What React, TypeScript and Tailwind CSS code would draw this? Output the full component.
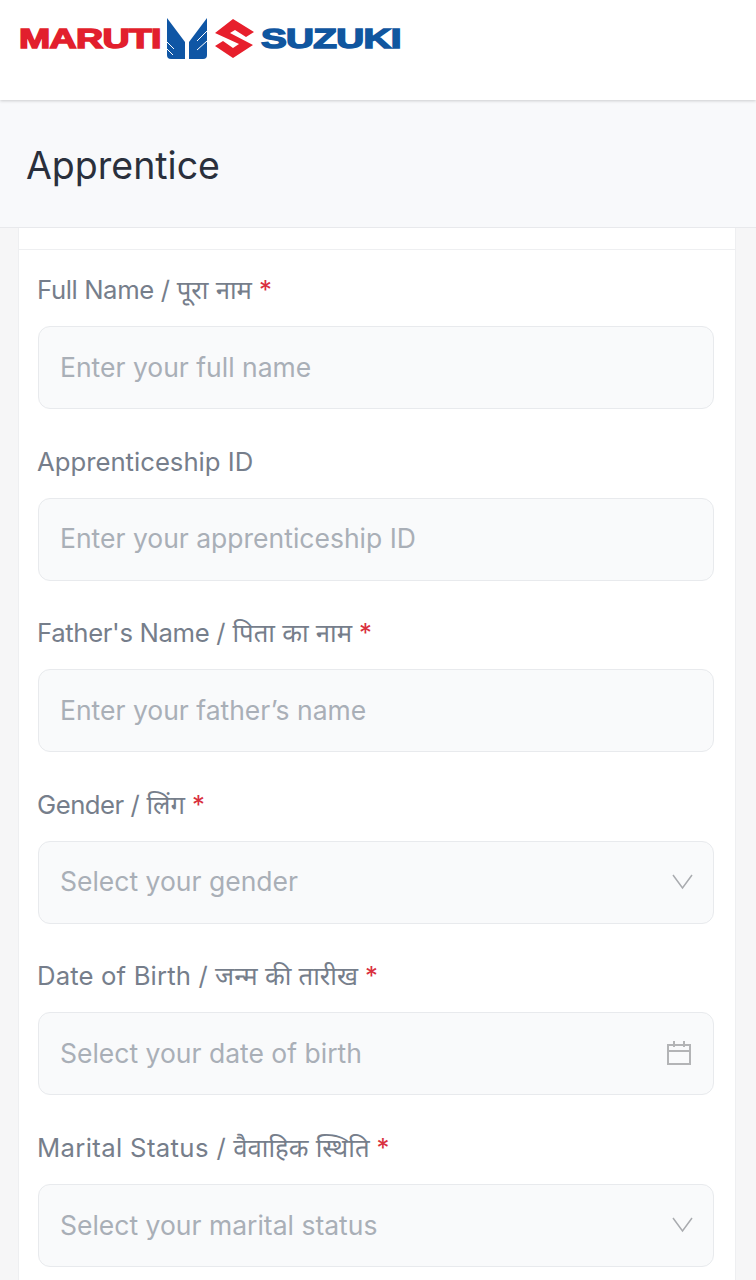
const fields = [
    { latin: 'Full Name /', hindi: 'पूरा नाम', required: true, tracking: 'tracking-[-0.4px]', placeholder: 'Enter your full name' },
    { latin: 'Apprenticeship ID', hindi: '', required: false, tracking: '', placeholder: 'Enter your apprenticeship ID' },
    { latin: "Father's Name /", hindi: 'पिता का नाम', required: true, tracking: 'tracking-[-0.35px]', placeholder: 'Enter your father’s name' },
    { latin: 'Gender /', hindi: 'लिंग', required: true, tracking: 'tracking-[-0.5px]', placeholder: 'Select your gender', icon: 'chevron' },
    { latin: 'Date of Birth /', hindi: 'जन्म की तारीख', required: true, tracking: 'tracking-[0.15px]', placeholder: 'Select your date of birth', icon: 'calendar' },
    { latin: 'Marital Status /', hindi: 'वैवाहिक स्थिति', required: true, tracking: 'tracking-[0.35px]', placeholder: 'Select your marital status', icon: 'chevron' },
];

function Logo() {
    return (
        <div className="flex items-center font-['Liberation_Sans',sans-serif] font-bold leading-none">
            <span className="w-[141px] text-[28px] tracking-[-0.5px] text-[#e21f2d] [-webkit-text-stroke:1.5px_#e21f2d] origin-left scale-x-[1.34]">
                MARUTI
            </span>
            <svg width="42" height="41" viewBox="0 0 42 41" className="ml-[6px]">
                <path d="M1 0 L19 24 V41 H5 Q1 41 1 37 Z" fill="#0f56a5" />
                <path d="M41 0 L23 24 V41 H37 Q41 41 41 37 Z" fill="#0f56a5" />
                <path d="M1 24 L8 31 M1 31 L7 37" stroke="#fff" strokeWidth="1" />
                <path d="M41 13 L31 23 M41 23 L31 32" stroke="#fff" strokeWidth="1" />
            </svg>
            <svg width="40" height="40" viewBox="0 0 40 40" className="ml-[7px]">
                <path d="M18 0 L39 13 L31 18 L20 11 L15 14 L38 26 L18 39 L0 27 L8 22 L18 29 L24 25 L0 14 Z" fill="#e71f2c" />
            </svg>
            <span className="ml-[6px] text-[28px] tracking-[-0.5px] text-[#10569f] [-webkit-text-stroke:1.5px_#10569f] origin-left scale-x-[1.38]">
                SUZUKI
            </span>
        </div>
    );
}

function ChevronIcon() {
    return (
        <svg width="21" height="16" viewBox="0 0 21 16" fill="none" stroke="#a9abaf" strokeWidth="1.5">
            <path d="M1 1 L10.5 14 L20 1" />
        </svg>
    );
}

function CalendarIcon() {
    return (
        <svg width="26" height="26" viewBox="0 0 26 26" fill="none" stroke="#b3b4b6" strokeWidth="2" className="mb-[2px] mr-[1px]">
            <rect x="2" y="5" width="22" height="19" />
            <path d="M2 11 H24 M8 1 V7 M18 1 V7" />
        </svg>
    );
}

export default function App() {
    return (
        <div className="h-[1280px] overflow-hidden bg-[#f6f6f7] font-['Inter','Noto_Sans',sans-serif]">
            {/* Header */}
            <header className="relative h-[100px] bg-white pl-[19px] pt-[18px] shadow-[0_1px_3px_rgba(0,0,0,0.18)]">
                <Logo />
            </header>

            {/* Title band */}
            <div className="flex h-[128px] items-center border-b border-[#e8e9ec] bg-[#f8f9fb] pl-[26px] pt-[6px]">
                <h1 className="text-[37.5px] font-normal text-[#2a303c]">Apprentice</h1>
            </div>

            {/* Form card */}
            <main className="mx-[18px] w-[718px] border-x border-[#eeeff1] bg-white">
                <div className="h-[22px] border-b border-[#eeeff1]" />
                <form className="pl-[19px] pr-[21px] pt-[23px]">
                    {fields.map(f => (
                        <div key={f.latin} className="h-[171.6px]">
                            <label className="-ml-px block h-[53px] text-[25.7px] leading-[33px] text-[#767e8b]">
                                <span className={f.tracking}>{f.latin}</span>
                                {f.hindi && ` ${f.hindi}`}
                                {f.required && <span className="ml-[7px] text-[#d9303e]">*</span>}
                            </label>
                            <div className="flex h-[83px] items-center justify-between rounded-[12px] border border-[#e8eaed] bg-[#f9fafb] pl-[21px] pr-[20px]">
                                <span className="text-[26.5px] text-[#a9afb7]">{f.placeholder}</span>
                                {f.icon === 'chevron' && <ChevronIcon />}
                                {f.icon === 'calendar' && <CalendarIcon />}
                            </div>
                        </div>
                    ))}
                </form>
            </main>
        </div>
    );
}
